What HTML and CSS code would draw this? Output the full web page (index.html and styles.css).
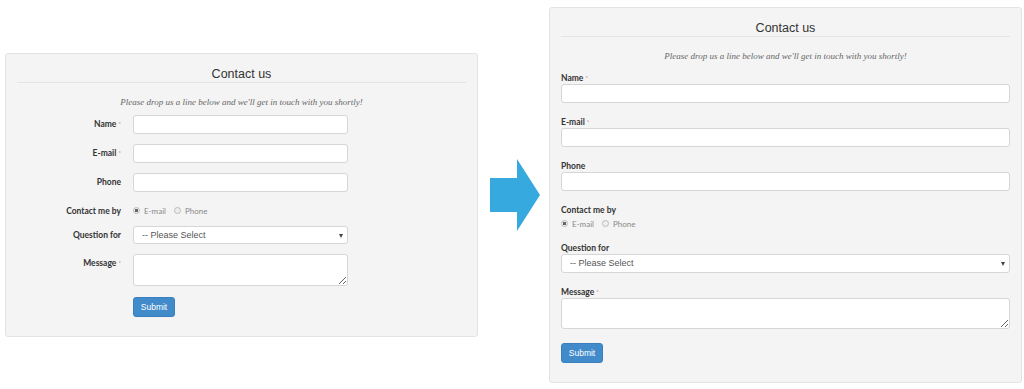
FILE: index.html
```html
<!DOCTYPE html>
<html>
<head>
    <title>Contact form - horizontal vs stacked</title>
    <meta name="viewport" content="width=device-width, initial-scale=1">
    <link rel="stylesheet" href="styles.css">
</head>
<body>
    <div class="compare">
        <!-- horizontal layout -->
        <div class="panel panel-horizontal">
            <h2 class="panel-title">Contact us</h2>
            <p class="intro">Please drop us a line below and we'll get in touch with you shortly!</p>
            <div class="form-h">
                <label class="lbl">Name <span class="req">*</span></label>
                <input type="text" class="field">

                <label class="lbl">E-mail <span class="req">*</span></label>
                <input type="text" class="field">

                <label class="lbl">Phone</label>
                <input type="text" class="field">

                <label class="lbl lbl-radio">Contact me by</label>
                <div class="radios">
                    <label class="radio"><input type="radio" name="by1" checked> E-mail</label>
                    <label class="radio"><input type="radio" name="by1"> Phone</label>
                </div>

                <label class="lbl">Question for</label>
                <div class="select-wrap">
                    <select class="field select"><option>-- Please Select</option></select>
                </div>

                <label class="lbl">Message <span class="req">*</span></label>
                <textarea class="field area"></textarea>

                <span></span>
                <div><button class="btn-submit">Submit</button></div>
            </div>
        </div>

        <svg class="arrow" width="51" height="72" viewBox="0 0 51 72">
            <polygon points="0,19 27,19 27,0 50,36 27,72 27,53 0,53" fill="#36a9de"/>
        </svg>

        <!-- stacked layout -->
        <div class="panel panel-stacked">
            <h2 class="panel-title">Contact us</h2>
            <p class="intro">Please drop us a line below and we'll get in touch with you shortly!</p>
            <div class="form-v">
                <div class="group">
                    <label class="lbl">Name <span class="req">*</span></label>
                    <input type="text" class="field">
                </div>
                <div class="group">
                    <label class="lbl">E-mail <span class="req">*</span></label>
                    <input type="text" class="field">
                </div>
                <div class="group">
                    <label class="lbl">Phone</label>
                    <input type="text" class="field">
                </div>
                <div class="group">
                    <label class="lbl">Contact me by</label>
                    <div class="radios">
                        <label class="radio"><input type="radio" name="by2" checked> E-mail</label>
                        <label class="radio"><input type="radio" name="by2"> Phone</label>
                    </div>
                </div>
                <div class="group">
                    <label class="lbl">Question for</label>
                    <div class="select-wrap">
                        <select class="field select"><option>-- Please Select</option></select>
                    </div>
                </div>
                <div class="group">
                    <label class="lbl">Message <span class="req">*</span></label>
                    <textarea class="field area"></textarea>
                </div>
                <div class="group">
                    <button class="btn-submit">Submit</button>
                </div>
            </div>
        </div>
    </div>
</body>
</html>
```

FILE: styles.css
```css
body {
    margin: 0;
    background: #fff;
    font-family: "Liberation Sans", Arial, sans-serif;
    color: #333;
}
.compare {
    display: flex;
    align-items: center;
    height: 389px;
    padding-left: 5px;
    box-sizing: border-box;
}
.panel {
    width: 473px;
    box-sizing: border-box;
    background: #f4f4f4;
    border: 1px solid #e3e3e3;
    border-radius: 3px;
    padding: 12px 11px 19px;
}
.arrow {
    margin: 0 8px 0 12px;
    flex-shrink: 0;
}
.panel-title {
    margin: 0;
    font-size: 12.5px;
    font-weight: normal;
    line-height: 16px;
    text-align: center;
    color: #333;
    border-bottom: 1px solid #e4e4e4;
}
.intro {
    margin: 14px 0 0;
    font-family: "Liberation Serif", "Times New Roman", serif;
    font-style: italic;
    font-size: 9px;
    line-height: 10px;
    text-align: center;
    color: #666;
}
.lbl {
    font-family: Lato, "Open Sans", sans-serif;
    font-weight: bold;
    font-size: 8.5px;
    line-height: 10px;
    color: #333;
}
.req {
    color: #e05a5a;
    font-weight: normal;
    font-size: 6px;
    vertical-align: top;
}
.field {
    display: block;
    width: 100%;
    box-sizing: border-box;
    height: 19px;
    margin: 0;
    border: 1px solid #d6d6d6;
    border-radius: 3px;
    background: #fff;
    font: 9px "Liberation Sans", Arial, sans-serif;
    color: #555;
}
.select-wrap {
    position: relative;
}
.select-wrap::after {
    content: "";
    position: absolute;
    right: 5px;
    top: 8px;
    border-left: 2.5px solid transparent;
    border-right: 2.5px solid transparent;
    border-top: 4px solid #444;
}
.select {
    appearance: none;
    -webkit-appearance: none;
    padding: 0 8px;
}
.area {
    height: 31px;
    resize: vertical;
}
.radios {
    display: flex;
    align-items: center;
    gap: 8px;
}
.radio {
    display: flex;
    align-items: center;
    gap: 4px;
    font-family: Lato, "Open Sans", sans-serif;
    font-size: 8px;
    color: #888;
}
.radio input {
    appearance: none;
    -webkit-appearance: none;
    margin: 0;
    width: 7px;
    height: 7px;
    border: 1px solid #bbb;
    border-radius: 50%;
    background: #eee;
    box-sizing: border-box;
}
.radio input:checked {
    background: radial-gradient(circle, #666 0 1.5px, #eee 2px);
}
.btn-submit {
    width: 42px;
    height: 20px;
    padding: 0;
    border: 1px solid #3a7fbd;
    border-radius: 3px;
    background: #428bca;
    color: #fff;
    font: 8.5px "Liberation Sans", Arial, sans-serif;
}

/* horizontal form */
.form-h {
    display: grid;
    grid-template-columns: 104px 215px;
    column-gap: 12px;
    row-gap: 10px;
    margin-top: 8px;
}
.form-h .lbl {
    text-align: right;
    padding-top: 4px;
}
.form-h .lbl-radio {
    padding-top: 4px;
}
.form-h .radios {
    height: 14px;
    margin-top: 2px;
    margin-bottom: -2px;
}
.form-h .select {
    height: 18px;
}
.form-h .area {
    height: 32px;
}

/* stacked form */
.form-v {
    margin-top: 12px;
}
.form-v .group {
    margin-bottom: 14px;
}
.form-v .group:nth-last-child(2) {
    margin-bottom: 13px;
}
.form-v .group:last-child {
    margin-bottom: 0;
}
.form-v .lbl {
    display: block;
    margin-bottom: 1px;
}
.form-v .radios {
    margin-top: 4px;
}
```
